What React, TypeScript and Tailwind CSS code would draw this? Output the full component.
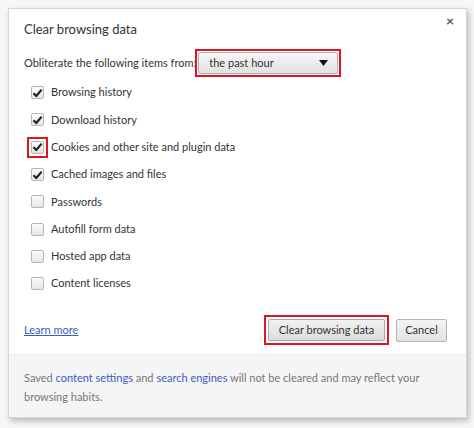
import { useState } from "react";

const items: { label: string; checked: boolean; marked?: boolean }[] = [
  { label: "Browsing history", checked: true },
  { label: "Download history", checked: true },
  { label: "Cookies and other site and plugin data", checked: true, marked: true },
  { label: "Cached images and files", checked: true },
  { label: "Passwords", checked: false },
  { label: "Autofill form data", checked: false },
  { label: "Hosted app data", checked: false },
  { label: "Content licenses", checked: false },
];

function Check({ on }: { on: boolean }) {
  return (
    <span className="flex h-[13px] w-[13px] items-center justify-center rounded-[2px] border border-[#b5b5b5] bg-gradient-to-b from-[#fbfbfb] to-[#e6e6e6]">
      {on && (
        <svg width="11" height="10" viewBox="0 0 11 10">
          <path d="M1.5 5.2 L4.3 8 L9.6 1.6" fill="none" stroke="#222" strokeWidth="2.2" strokeLinejoin="round" />
        </svg>
      )}
    </span>
  );
}

export default function App() {
  const [state, setState] = useState(items.map((i) => i.checked));

  return (
    <div className="flex h-[428px] w-[474px] overflow-hidden bg-[#f7f7f7] pl-[8px] font-['Lato',sans-serif] text-[11px] text-[#333]">
      <div className="mt-[8px] flex h-[410px] w-[459px] shrink-0 flex-col border border-[#d6d6d6] bg-white shadow-[2px_3px_6px_rgba(0,0,0,0.25)]">
        <div className="flex items-start justify-between pl-[15px] pr-[12px] pt-[11px]">
          <h1 className="text-[13px] leading-[18px] text-[#333]">Clear browsing data</h1>
          <span className="mt-[-8px] text-[14px] font-bold leading-[18px] text-[#555]">×</span>
        </div>

        <div className="mt-[11px] flex h-[28px] items-center pl-[15px]">
          <span className="whitespace-nowrap">Obliterate the following items from:</span>
          <div className="ml-[-1px] border-2 border-[#e0141e] p-px">
            <div className="flex h-[22px] w-[140px] items-center justify-between rounded-[2px] border border-[#b3b3b3] bg-gradient-to-b from-[#f6f6f6] to-[#e2e2e2] pl-[10px] pr-[9px]">
              <span>the past hour</span>
              <svg width="9" height="6" viewBox="0 0 9 6">
                <path d="M0 0 H9 L4.5 6 Z" fill="#111" />
              </svg>
            </div>
          </div>
        </div>

        <ul className="mt-[2px] flex flex-col pl-[22px]">
          {items.map((it, i) => (
            <li
              key={it.label}
              className="flex h-[27.3px] cursor-default items-center gap-[7px]"
              onClick={() => setState((s) => s.map((v, j) => (j === i ? !v : v)))}
            >
              <span className={it.marked ? "-mx-[4px] -my-[4px] border-2 border-[#e0141e] p-[2px]" : ""}>
                <Check on={state[i]} />
              </span>
              <span>{it.label}</span>
            </li>
          ))}
        </ul>

        <div className="mt-[18px] flex h-[30px] items-center justify-between pl-[15px] pr-[19px]">
          <a href="#" className="text-[#3b5cc4] underline">Learn more</a>
          <div className="flex items-center gap-[7px]">
            <div className="border-2 border-[#e0141e] p-[2px]">
              <button className="h-[22px] w-[117px] rounded-[2px] border border-[#a9a9a9] bg-gradient-to-b from-[#f1f1f1] to-[#dcdcdc] text-[#333]">
                Clear browsing data
              </button>
            </div>
            <button className="h-[23px] w-[51px] rounded-[2px] border border-[#b5b5b5] bg-gradient-to-b from-[#f4f4f4] to-[#e2e2e2] text-[#333]">
              Cancel
            </button>
          </div>
        </div>

        <div className="mt-auto h-[63px] border-t border-[#ececec] bg-[#f5f5f5] px-[15px] pt-[13px] leading-[19px] text-[#777]">
          Saved <span className="text-[#3b5cc4]">content settings</span> and{" "}
          <span className="text-[#3b5cc4]">search engines</span> will not be cleared and may reflect your
          <br />
          browsing habits.
        </div>
      </div>
    </div>
  );
}
